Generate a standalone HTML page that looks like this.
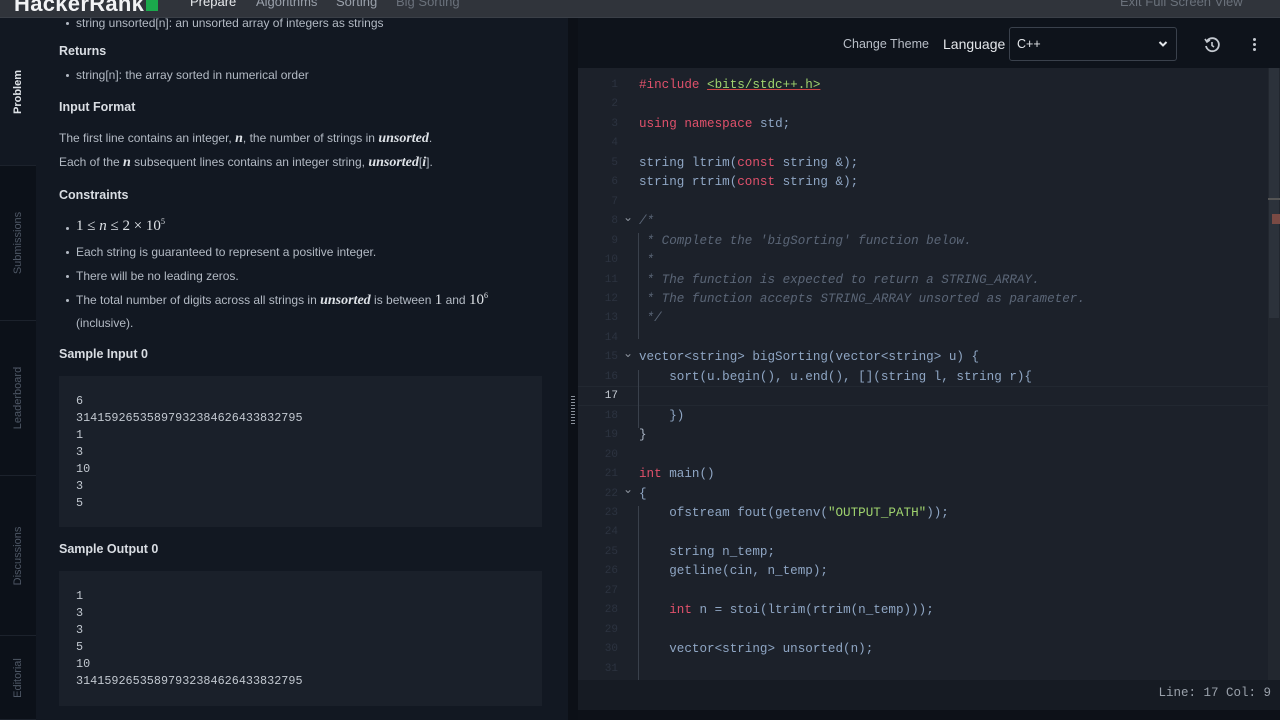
<!DOCTYPE html>
<html><head><meta charset="utf-8">
<style>
*{margin:0;padding:0;box-sizing:border-box}
html{width:1280px;height:720px;overflow:hidden}
body{width:1280px;height:720px;overflow:hidden;background:#0f141c;font-family:"Liberation Sans",sans-serif;position:relative;color:#c9ced6}
.top{position:absolute;left:0;top:0;width:1280px;height:18px;background:#30343b;border-bottom:1px solid #3a3f47;overflow:hidden}
.logo{position:absolute;left:14px;top:-9px;font-weight:bold;font-size:22px;color:#f2f3f5;letter-spacing:0.3px}
.logo span{display:inline-block;width:12px;height:12px;background:#1ba94c;margin-left:2px}
.nav{position:absolute;top:-6px;font-size:13px;color:#c9ced6}
.side{position:absolute;left:0;top:18px;width:36px;height:702px;background:#0c1119;overflow:hidden}
.tab{position:absolute;left:0;width:36px;border-bottom:1px solid #1c222c}
.tab div{position:absolute;left:50%;top:50%;transform:translate(-50%,-50%) rotate(-90deg);font-size:11px;color:#4f5866;white-space:nowrap}
.left{position:absolute;left:36px;top:18px;width:532px;height:702px;background:#121822}
.t{position:absolute;font-size:12px;color:#b3bac4;white-space:nowrap}
.h{position:absolute;font-size:12.5px;font-weight:bold;color:#d9dde3}
.b{position:absolute;width:3px;height:3px;border-radius:50%;background:#b3bac4}
i.m{font-family:"Liberation Serif",serif;font-style:italic;font-weight:bold;font-size:14px;color:#dde1e6}
.box{position:absolute;left:59px;width:483px;background:#1a202a}
.box pre{position:absolute;left:17px;font-family:"Liberation Mono",monospace;font-size:11.8px;line-height:17px;color:#c2c8d0}
.split{position:absolute;left:568px;top:18px;width:10px;height:702px;background:#0c1017}
.ehead{position:absolute;left:578px;top:18px;width:702px;height:52px;background:#0e131b}
.editor{position:absolute;left:578px;top:68px;width:690px;height:612px;background:#1c212a}
.sb{position:absolute;left:1268px;top:68px;width:12px;height:612px;background:#22272f}
.status{position:absolute;left:578px;top:680px;width:702px;height:30px;background:#161b23}
.bot{position:absolute;left:578px;top:710px;width:702px;height:10px;background:#0d1118}
.code{position:absolute;left:639px;top:76px;height:604px;overflow:hidden;font-family:"Liberation Mono",monospace;font-size:12.6px;line-height:19.45px;color:#8fa6c4;white-space:pre}
.ln{position:absolute;left:588px;width:30px;top:76px;height:604px;overflow:hidden;font-family:"Liberation Mono",monospace;font-size:11px;line-height:19.45px;color:#2c3340;text-align:right;white-space:pre}
.k{color:#e0516b}
.s{color:#9fd36e}
.c{color:#5b6677;font-style:italic}
.w{color:#a9b4c4}
</style></head><body>
<div class="top">
 <div class="logo">HackerRank<span></span></div>
 <div class="nav" style="left:190px;color:#e8eaed">Prepare</div>
 <div class="nav" style="left:256px;color:#9aa1ab">Algorithms</div>
 <div class="nav" style="left:336px;color:#9aa1ab">Sorting</div>
 <div class="nav" style="left:396px;color:#6a717b">Big Sorting</div>
 <div class="nav" style="left:1120px;color:#6a717b">Exit Full Screen View</div>
</div>
<div class="side">
 <div class="tab" style="top:0;height:148px;background:#121822"><div style="color:#dfe3e8;font-weight:bold">Problem</div></div>
 <div class="tab" style="top:148px;height:155px"><div>Submissions</div></div>
 <div class="tab" style="top:303px;height:155px"><div>Leaderboard</div></div>
 <div class="tab" style="top:458px;height:160px"><div>Discussions</div></div>
 <div class="tab" style="top:618px;height:84px"><div>Editorial</div></div>
</div>
<div class="left"></div>
<div class="b" style="left:66px;top:22px"></div><div class="t" style="left:76px;top:16px">string unsorted[n]: an unsorted array of integers as strings</div>
<div class="h" style="left:59px;top:44px">Returns</div>
<div class="b" style="left:66px;top:74px"></div><div class="t" style="left:76px;top:68px">string[n]: the array sorted in numerical order</div>
<div class="h" style="left:59px;top:100px">Input Format</div>
<div class="t" style="left:59px;top:131px">The first line contains an integer, <i class="m">n</i>, the number of strings in <i class="m">unsorted</i>.</div>
<div class="t" style="left:59px;top:155px">Each of the <i class="m">n</i> subsequent lines contains an integer string, <i class="m">unsorted</i>[<i class="m">i</i>].</div>
<div class="h" style="left:59px;top:188px">Constraints</div>
<div class="b" style="left:66px;top:227px"></div><div class="t" style="left:76px;top:217px;font-family:'Liberation Serif',serif;font-size:15px;color:#dde1e6">1 ≤ <i>n</i> ≤ 2 × 10<sup style="font-size:8px">5</sup></div>
<div class="b" style="left:66px;top:251px"></div><div class="t" style="left:76px;top:245px">Each string is guaranteed to represent a positive integer.</div>
<div class="b" style="left:66px;top:275px"></div><div class="t" style="left:76px;top:269px">There will be no leading zeros.</div>
<div class="b" style="left:66px;top:299px"></div><div class="t" style="left:76px;top:291px">The total number of digits across all strings in <i class="m">unsorted</i> is between <span style="font-family:'Liberation Serif',serif;font-size:15px;color:#dde1e6">1</span> and <span style="font-family:'Liberation Serif',serif;font-size:15px;color:#dde1e6">10<sup style="font-size:8px">6</sup></span></div>
<div class="t" style="left:76px;top:316px">(inclusive).</div>
<div class="h" style="left:59px;top:347px">Sample Input 0</div>
<div class="box" style="top:376px;height:151px"><pre style="top:17px">6
31415926535897932384626433832795
1
3
10
3
5</pre></div>
<div class="h" style="left:59px;top:542px">Sample Output 0</div>
<div class="box" style="top:571px;height:135px"><pre style="top:17px">1
3
3
5
10
31415926535897932384626433832795</pre></div>
<div class="split"><div style="position:absolute;left:3px;top:378px;width:4px;height:30px;background:repeating-linear-gradient(#8a919b 0 1px,transparent 1px 3px)"></div></div>
<div class="ehead">
 <div style="position:absolute;left:265px;top:19px;font-size:12.5px;color:#b8bec7">Change Theme</div>
 <div style="position:absolute;left:365px;top:18px;font-size:14px;color:#e3e6ea">Language</div>
 <div style="position:absolute;left:431px;top:9px;width:168px;height:34px;border:1px solid #3a414c;border-radius:3px;background:#0e131b">
  <div style="position:absolute;left:7px;top:9px;font-size:12.5px;color:#e3e6ea">C++</div>
  <svg style="position:absolute;left:148px;top:12px" width="10" height="8" viewBox="0 0 10 8"><path d="M1.5 2 L5 5.5 L8.5 2" stroke="#e3e6ea" stroke-width="2" fill="none"/></svg>
 </div>
 <svg style="position:absolute;left:625px;top:18px" width="18" height="18" viewBox="0 0 18 18"><path d="M4 5 A6.5 6.5 0 1 1 3 10" stroke="#c4c9d0" stroke-width="1.8" fill="none"/><path d="M2 3 L4 6 L7 4" stroke="#c4c9d0" stroke-width="1.6" fill="none"/><path d="M9 6 V9.5 L11 11" stroke="#c4c9d0" stroke-width="1.6" fill="none"/></svg>
 <div style="position:absolute;left:675px;top:20px;width:3px;height:3px;background:#c4c9d0;border-radius:50%;box-shadow:0 5px 0 #c4c9d0,0 10px 0 #c4c9d0"></div>
</div>
<div class="editor"></div>
<div style="position:absolute;left:578px;top:386px;width:690px;height:20px;border-top:1px solid #222831;border-bottom:1px solid #222831"></div>
<div class="sb"><div style="position:absolute;left:1px;top:0;width:10px;height:250px;background:#2c323b"></div><div style="position:absolute;left:0;top:130px;width:12px;height:2px;background:#555"></div><div style="position:absolute;left:4px;top:146px;width:8px;height:10px;background:#7a4a44"></div></div>
<div style="position:absolute;left:638px;top:233px;width:1px;height:106px;background:#3a414c"></div>
<div style="position:absolute;left:638px;top:370px;width:1px;height:58px;background:#3a414c"></div>
<div style="position:absolute;left:638px;top:506px;width:1px;height:174px;background:#3a414c"></div>
<div class="ln">1
2
3
4
5
6
7
8
9
10
11
12
13
14
15
16
<span style="color:#c8ced6">17</span>
18
19
20
21
22
23
24
25
26
27
28
29
30
31</div>
<div style="position:absolute;left:623px;top:210px;font-size:12px;color:#8a919b">⌄</div>
<div style="position:absolute;left:623px;top:346px;font-size:12px;color:#8a919b">⌄</div>
<div style="position:absolute;left:623px;top:482px;font-size:12px;color:#8a919b">⌄</div>
<div class="code"><span class="k">#include</span> <span class="s" style="text-decoration:underline;text-decoration-color:#c44">&lt;bits/stdc++.h&gt;</span>

<span class="k">using</span> <span class="k">namespace</span> std;

string ltrim(<span class="k">const</span> string &amp;);
string rtrim(<span class="k">const</span> string &amp;);

<span class="c">/*</span>
<span class="c"> * Complete the 'bigSorting' function below.</span>
<span class="c"> *</span>
<span class="c"> * The function is expected to return a STRING_ARRAY.</span>
<span class="c"> * The function accepts STRING_ARRAY unsorted as parameter.</span>
<span class="c"> */</span>

vector&lt;string&gt; bigSorting(vector&lt;string&gt; u) {
    sort(u.begin(), u.end(), [](string l, string r){

    })
<span class="w">}</span>

<span class="k">int</span> main()
{
    ofstream fout(getenv(<span class="s">"OUTPUT_PATH"</span>));

    string n_temp;
    getline(cin, n_temp);

    <span class="k">int</span> n = stoi(ltrim(rtrim(n_temp)));

    vector&lt;string&gt; unsorted(n);
</div>
<div class="status"><div style="position:absolute;right:9px;top:6px;font-family:'Liberation Mono',monospace;font-size:12.5px;color:#9aa1ab">Line: 17 Col: 9</div></div>
<div class="bot"></div>
</body></html>
